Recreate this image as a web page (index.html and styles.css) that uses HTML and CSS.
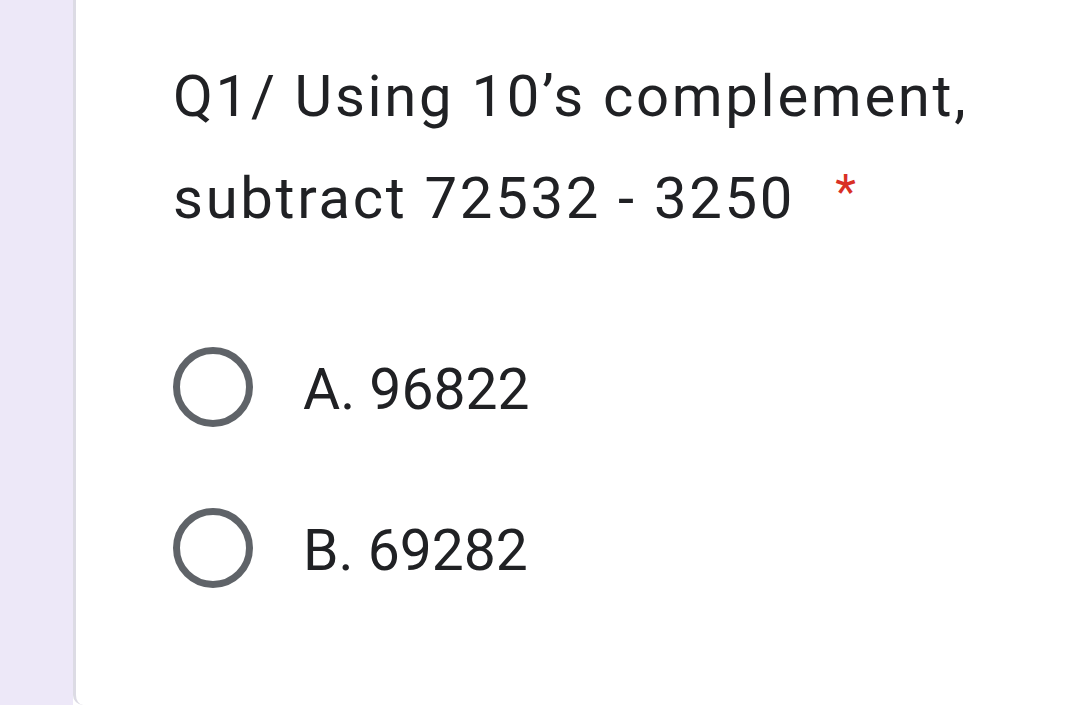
FILE: index.html
```html
<!DOCTYPE html>
<html>
<head>
<meta charset="utf-8">
<link rel="stylesheet" href="styles.css">
</head>
<body>
<div class="page">
  <div class="strip"></div>
  <div class="card">
    <div class="question">Q1/ Using 10’s complement, subtract 72532 - 3250<span class="req">*</span></div>
    <div class="options">
      <label class="option"><span class="radio"></span><span class="label">A. 96822</span></label>
      <label class="option"><span class="radio"></span><span class="label">B. 69282</span></label>
    </div>
  </div>
</div>
</body>
</html>
```
FILE: styles.css
```css
html, body {
  margin: 0;
  padding: 0;
  background: #ffffff;
}
.page {
  display: flex;
  width: 1080px;
  height: 705px;
  overflow: hidden;
}
.strip {
  width: 73px;
  flex: none;
  background: #ede8f8;
}
.card {
  flex: 1;
  background: #ffffff;
  border-left: 3px solid #dcdbe4;
  border-bottom-left-radius: 10px;
  padding: 49px 40px 0 97px;
  font-family: Roboto, "Noto Sans", sans-serif;
  color: #202124;
}
.question {
  font-size: 58px;
  line-height: 95px;
  letter-spacing: 2.7px;
  width: 840px;
}
.req {
  color: #d93025;
  font-size: 48px;
  vertical-align: 10px;
  margin-left: 40px;
  letter-spacing: 0;
}
.options {
  display: flex;
  flex-direction: column;
  gap: 81px;
  margin-top: 101px;
}
.option {
  display: flex;
  align-items: center;
  height: 80px;
}
.radio {
  width: 66px;
  height: 66px;
  border: 7px solid #5f6368;
  border-radius: 50%;
  flex: none;
}
.label {
  font-size: 57px;
  margin-left: 50px;
  margin-top: 4px;
  color: #202124;
}
```
